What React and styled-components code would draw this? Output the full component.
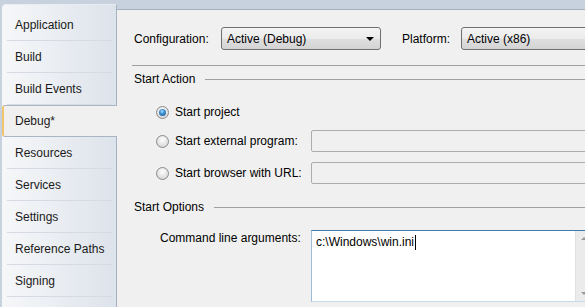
import styled, { createGlobalStyle } from 'styled-components';

const GlobalStyle = createGlobalStyle`
	html, body {
		margin: 0;
		padding: 0;
		overflow: hidden;
	}
	body {
		font-family: "Liberation Sans", Arial, sans-serif;
		font-size: 12px;
		color: #000;
	}
`;

const Window = styled.div`
	display: flex;
	width: 585px;
	height: 307px;
	background: #c8d2df;
	overflow: hidden;
`;

const Sidebar = styled.nav`
	width: 115px;
	flex-shrink: 0;
	margin: 4px 0 0 2px;
	padding-top: 4px;
	display: flex;
	flex-direction: column;
	box-sizing: border-box;
	border-top-left-radius: 4px;
	border-top: 1px solid #e9edf3;
	border-right: 1px solid #a6b2c3;
	background: linear-gradient(to right, #f6f7f9, #dde3eb);
`;

const Tab = styled.div`
	position: relative;
	height: 32px;
	display: flex;
	align-items: center;
	padding-left: 13px;
	color: #1a1a1a;
	box-sizing: border-box;

	&::after {
		content: '';
		position: absolute;
		left: 5px;
		right: 4px;
		bottom: 0;
		height: 1px;
		background: ${(p) => (p.$active ? 'transparent' : '#d6dbe3')};
	}

	${(p) =>
		p.$active &&
		`
		background: #f0f0f0;
		margin-right: -1px;
		padding-left: 11px;
		border-top: 1px solid #a9b4c4;
		border-bottom: 1px solid #a9b4c4;
		border-left: 2px solid #f1c56c;
		border-radius: 3px 0 0 3px;
	`}
`;

const Content = styled.main`
	flex: 1;
	min-width: 0;
	margin-top: 9px;
	padding-left: 15px;
	display: flex;
	flex-direction: column;
	background: #f0f0f0;
	border-top: 1px solid #a4aebc;
	overflow: hidden;
`;

const ConfigRow = styled.div`
	display: flex;
	align-items: center;
	height: 23px;
	margin-top: 17px;
	padding-left: 2px;
`;

const FieldLabel = styled.span`
	width: ${(p) => p.$width}px;
	margin-left: ${(p) => p.$offset || 0}px;
	flex-shrink: 0;
	white-space: nowrap;
`;

const Select = styled.div`
	width: ${(p) => p.$width}px;
	height: 23px;
	flex-shrink: 0;
	box-sizing: border-box;
	display: flex;
	align-items: center;
	justify-content: space-between;
	padding: 0 6px 0 5px;
	border: 1px solid #707070;
	border-radius: 3px;
	background: linear-gradient(#f3f3f3 0%, #ebebeb 50%, #dfdfdf 51%, #d3d3d3 100%);
	white-space: nowrap;
`;

const Arrow = styled.span`
	width: 0;
	height: 0;
	border-left: 4px solid transparent;
	border-right: 4px solid transparent;
	border-top: 4px solid #000;
`;

const Divider = styled.div`
	height: 1px;
	margin-top: 15px;
	background: #a0a0a0;
`;

const GroupHeader = styled.div`
	display: flex;
	align-items: center;
	gap: 10px;
	height: 16px;
	margin-top: ${(p) => p.$gap}px;
	padding-left: 2px;
	white-space: nowrap;

	&::after {
		content: '';
		flex: 1;
		height: 1px;
		background: #a0a0a0;
	}
`;

const Row = styled.div`
	display: flex;
	align-items: ${(p) => (p.$top ? 'flex-start' : 'center')};
	height: ${(p) => p.$height || 22}px;
	margin-top: ${(p) => p.$gap}px;
`;

const Choice = styled.label`
	width: 179px;
	flex-shrink: 0;
	box-sizing: border-box;
	padding-left: 24px;
	display: flex;
	align-items: center;
	gap: 6px;
	white-space: nowrap;
`;

const Radio = styled.span`
	position: relative;
	width: 13px;
	height: 13px;
	flex-shrink: 0;
	box-sizing: border-box;
	border-radius: 50%;
	border: 1px solid #8b8b8b;
	background: radial-gradient(circle at 50% 35%, #ffffff 0%, #e8e8e8 45%, #cdcdcd 100%);

	&::after {
		content: '';
		display: ${(p) => (p.$checked ? 'block' : 'none')};
		position: absolute;
		left: 2px;
		top: 2px;
		width: 7px;
		height: 7px;
		border-radius: 50%;
		background: radial-gradient(circle at 45% 35%, #a9e0ff 0%, #3c8fd0 40%, #1b4f86 100%);
	}
`;

const TextField = styled.div`
	width: 290px;
	height: 22px;
	flex-shrink: 0;
	box-sizing: border-box;
	border: 1px solid #adadad;
	border-radius: 2px;
	background: #f0f0f0;
`;

const ArgsLabel = styled.span`
	width: 179px;
	flex-shrink: 0;
	box-sizing: border-box;
	padding-left: 28px;
	line-height: 16px;
	white-space: nowrap;
`;

const TextArea = styled.div`
	width: 282px;
	height: 72px;
	flex-shrink: 0;
	box-sizing: border-box;
	display: flex;
	background: #fff;
	border: 1px solid;
	border-color: #3d7bad #b7d0e6 #c7dbee #9fbcd6;
`;

const TextValue = styled.div`
	flex: 1;
	padding: 4px;
	line-height: 14px;
	display: flex;
	align-items: flex-start;
`;

const Caret = styled.span`
	width: 1px;
	height: 15px;
	background: #000;
	margin-left: 1px;
`;

const Scrollbar = styled.div`
	width: 17px;
	box-sizing: border-box;
	display: flex;
	flex-direction: column;
	justify-content: space-between;
	align-items: center;
	padding: 6px 0;
	background: #ebebeb;
	border-left: 1px solid #e0e0e0;
`;

const ScrollArrow = styled.span`
	width: 0;
	height: 0;
	border-left: 3px solid transparent;
	border-right: 3px solid transparent;
	${(p) => (p.$down ? 'border-top: 3px solid #9a9a9a;' : 'border-bottom: 3px solid #9a9a9a;')}
`;

const tabs = [
	'Application',
	'Build',
	'Build Events',
	'Debug*',
	'Resources',
	'Services',
	'Settings',
	'Reference Paths',
	'Signing',
];

export default function App() {
	return (
		<>
			<GlobalStyle />
			<Window>
				<Sidebar>
					{tabs.map((t) => (
						<Tab key={t} $active={t === 'Debug*'}>
							{t}
						</Tab>
					))}
				</Sidebar>
				<Content>
					<ConfigRow>
						<FieldLabel $width={87}>Configuration:</FieldLabel>
						<Select $width={160}>
							Active (Debug)
							<Arrow />
						</Select>
						<FieldLabel $width={59} $offset={21}>
							Platform:
						</FieldLabel>
						<Select $width={160}>Active (x86)</Select>
					</ConfigRow>
					<Divider />
					<GroupHeader $gap={5}>Start Action</GroupHeader>
					<Row $gap={14}>
						<Choice>
							<Radio $checked />
							Start project
						</Choice>
					</Row>
					<Row $gap={7}>
						<Choice>
							<Radio />
							Start external program:
						</Choice>
						<TextField />
					</Row>
					<Row $gap={10}>
						<Choice>
							<Radio />
							Start browser with URL:
						</Choice>
						<TextField />
					</Row>
					<GroupHeader $gap={15}>Start Options</GroupHeader>
					<Row $gap={15} $height={72} $top>
						<ArgsLabel>Command line arguments:</ArgsLabel>
						<TextArea>
							<TextValue>
								c:\Windows\win.ini
								<Caret />
							</TextValue>
							<Scrollbar>
								<ScrollArrow />
								<ScrollArrow $down />
							</Scrollbar>
						</TextArea>
					</Row>
				</Content>
			</Window>
		</>
	);
}
